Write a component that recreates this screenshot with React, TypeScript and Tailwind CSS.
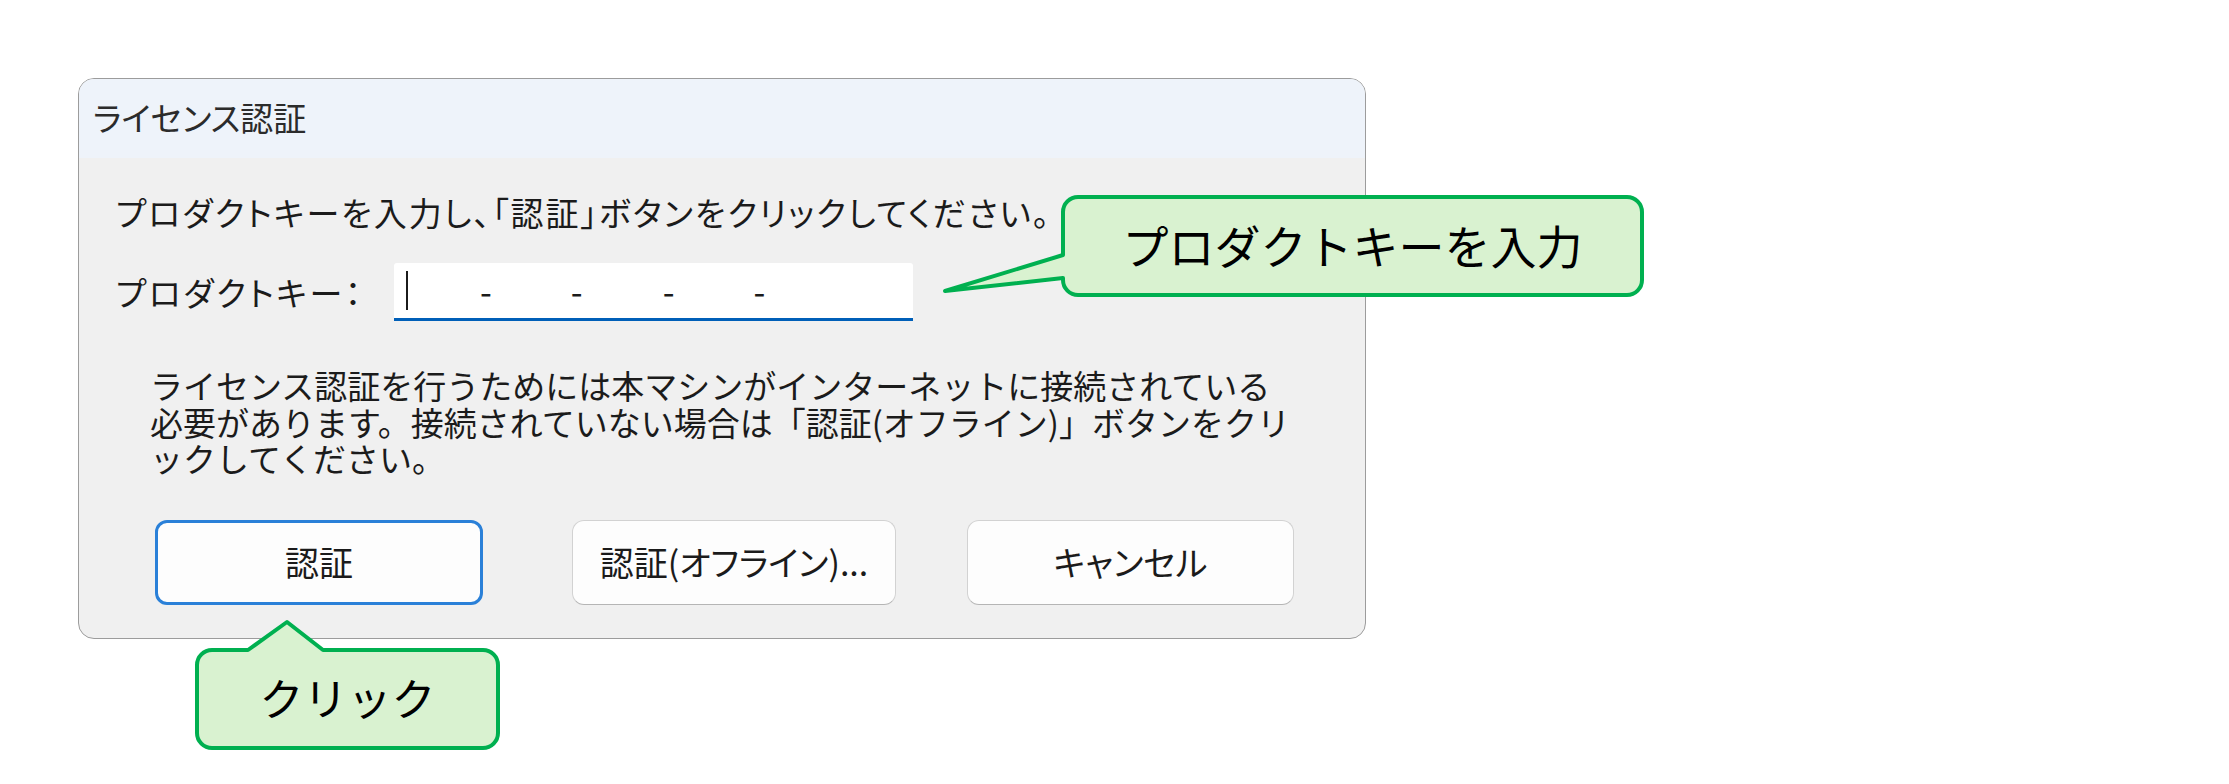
import React from 'react';

const jp = "font-['Noto_Sans_CJK_JP','Noto_Sans',sans-serif]";

const DialogButton: React.FC<{ label: string; primary?: boolean; className?: string }> = ({
  label,
  primary,
  className = '',
}) => (
  <button
    className={
      'h-[85px] flex items-center justify-center bg-[#fdfdfd] text-[34px] leading-none text-[#1b1b1b] [font-feature-settings:"palt"] ' +
      (primary
        ? 'border-[3px] border-[#2a80d8] rounded-[12px] '
        : 'border border-[#d2d2d2] border-b-[#b5b5b5] rounded-[12px] ') +
      className
    }
  >
    {label}
  </button>
);

export default function App() {
  return (
    <div className={`relative w-[2229px] h-[784px] bg-white overflow-hidden ${jp}`}>
      <div className="pt-[78px] pl-[78px]">
        {/* Dialog */}
        <div className="w-[1288px] h-[561px] flex flex-col border border-[#9c9c9c] rounded-[16px] overflow-hidden bg-[#f0f0f0] text-[#1b1b1b]">
          {/* Title bar */}
          <div className="h-[79px] shrink-0 bg-[#eef3fa] flex items-center pl-[14px] pb-[2px]">
            <span className="text-[33px] leading-none text-[#2b2b2b] [font-feature-settings:'palt']">ライセンス認証</span>
          </div>

          {/* Body */}
          <div className="flex flex-col pl-[37px]">
            <p className="mt-[36px] h-[36px] text-[33px] leading-[36px] tracking-[2px] whitespace-nowrap [font-feature-settings:'palt']">
              プロダクトキーを入力し、「認証」ボタンをクリックしてください。
            </p>

            <div className="mt-[33px] flex items-center h-[58px]">
              <span className="w-[278px] text-[33px] leading-none tracking-[2.5px] [font-feature-settings:'palt']">プロダクトキー：</span>
              <div className="w-[519px] h-[58px] bg-white border-b-[3px] border-[#005fb8] rounded-t-[3px] flex items-center pl-[12px] text-[34px] leading-none">
                <span className="w-[2px] h-[39px] bg-[#1b1b1b]" />
                <span className="ml-[72px]">-</span>
                <span className="ml-[79px]">-</span>
                <span className="ml-[80px]">-</span>
                <span className="ml-[79px]">-</span>
              </div>
            </div>

            <p className="mt-[46px] pl-[34px] text-[33px] leading-[36.5px] whitespace-nowrap">
              ライセンス認証を行うためには本マシンがインターネットに接続されている
              <br />
              必要があります。接続されていない場合は「認証(オフライン)」ボタンをクリ
              <br />
              ックしてください。
            </p>

            <div className="mt-[43px] flex">
              <DialogButton label="認証" primary className="ml-[39px] w-[328px]" />
              <DialogButton label="認証(オフライン)..." className="ml-[89px] w-[324px]" />
              <DialogButton label="キャンセル" className="ml-[71px] w-[327px]" />
            </div>
          </div>
        </div>
      </div>

      {/* Callout: product key */}
      <svg className="absolute left-[940px] top-[190px]" width="710" height="112" viewBox="0 0 710 112">
        <path
          d="M 138 7 H 687 A 15 15 0 0 1 702 22 V 90 A 15 15 0 0 1 687 105 H 138 A 15 15 0 0 1 123 90 V 88 L 5 101 L 123 65 V 22 A 15 15 0 0 1 138 7 Z"
          fill="#d9f2d0"
          stroke="#00b050"
          strokeWidth="4"
          strokeLinejoin="round"
        />
      </svg>
      <div className="absolute left-[1063px] top-[197px] w-[579px] h-[98px] flex items-center justify-center pb-[4px] text-[46px] leading-none text-black">
        プロダクトキーを入力
      </div>

      {/* Callout: click */}
      <svg className="absolute left-[190px] top-[615px]" width="320" height="140" viewBox="0 0 320 140">
        <path
          d="M 22 35 H 58 L 97 7 L 133 35 H 293 A 15 15 0 0 1 308 50 V 118 A 15 15 0 0 1 293 133 H 22 A 15 15 0 0 1 7 118 V 50 A 15 15 0 0 1 22 35 Z"
          fill="#d9f2d0"
          stroke="#00b050"
          strokeWidth="4"
          strokeLinejoin="round"
        />
      </svg>
      <div className="absolute left-[197px] top-[650px] w-[301px] h-[98px] flex items-center justify-center pb-[4px] text-[44px] leading-none text-black">
        クリック
      </div>
    </div>
  );
}
